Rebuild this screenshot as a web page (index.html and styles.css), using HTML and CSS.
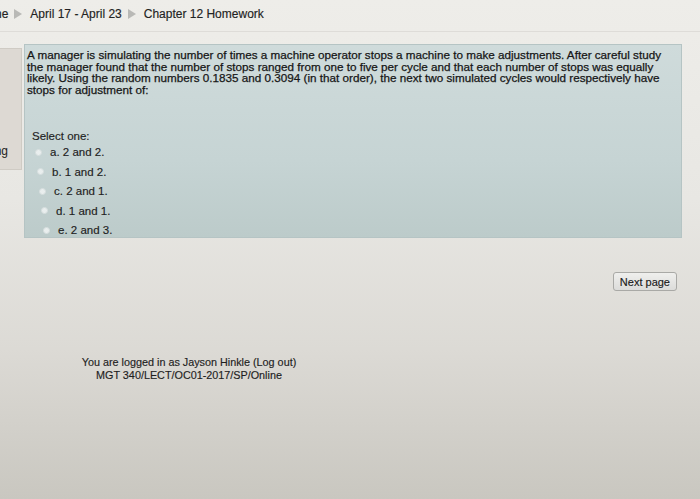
FILE: index.html
```html
<!DOCTYPE html>
<html>
<head>
<meta charset="utf-8">
<link rel="stylesheet" href="styles.css">
</head>
<body>
<div class="page">
  <div class="crumbs">
    <span class="cut">ne</span><span class="sep"></span><span>April 17 - April 23</span><span class="sep"></span><span>Chapter 12 Homework</span>
  </div>
  <div class="rule"></div>
  <div class="main">
    <div class="info"><span>ng</span></div>
    <div class="question">
      <p class="qtext">A manager is simulating the number of times a machine operator stops a machine to make adjustments. After careful study the manager found that the number of stops ranged from one to five per cycle and that each number of stops was equally likely. Using the random numbers 0.1835 and 0.3094 (in that order), the next two simulated cycles would respectively have stops for adjustment of:</p>
      <div class="prompt">Select one:</div>
      <div class="opts">
        <div class="opt"><span class="radio"></span>a. 2 and 2.</div>
        <div class="opt"><span class="radio"></span>b. 1 and 2.</div>
        <div class="opt"><span class="radio"></span>c. 2 and 1.</div>
        <div class="opt"><span class="radio"></span>d. 1 and 1.</div>
        <div class="opt"><span class="radio"></span>e. 2 and 3.</div>
      </div>
    </div>
  </div>
  <div class="nav"><button class="next">Next page</button></div>
  <div class="footer">
    <div>You are logged in as Jayson Hinkle (Log out)</div>
    <div>MGT 340/LECT/OC01-2017/SP/Online</div>
  </div>
</div>
</body>
</html>
```
FILE: styles.css
```css
html, body {
  margin: 0;
  padding: 0;
}
body {
  width: 700px;
  height: 499px;
  overflow: hidden;
  font-family: "Liberation Sans", Arial, sans-serif;
  color: #1e1e1e;
  background: linear-gradient(180deg, #eeede9 0%, #e8e7e3 40%, #dcdad5 70%, #c9c7c0 100%);
}
.page {
  height: 499px;
  display: flex;
  flex-direction: column;
}
.crumbs {
  display: flex;
  align-items: center;
  height: 28px;
  font-size: 12px;
  color: #222;
  margin-left: -5px;
  -webkit-text-stroke: 0.15px #222;
}
.sep {
  width: 0;
  height: 0;
  border-top: 5px solid transparent;
  border-bottom: 5px solid transparent;
  border-left: 8px solid #b9b9b6;
  margin: 0 8px 0 6px;
}
.rule {
  height: 1px;
  background: #dedcd8;
  margin-top: 3px;
}
.main {
  display: flex;
  align-items: flex-start;
  margin-top: 12px;
}
.info {
  width: 22px;
  height: 122px;
  margin-top: 4px;
  background: #ddd9d3;
  border: 1px solid #cfcbc4;
  border-left: none;
  box-sizing: border-box;
  display: flex;
  align-items: flex-end;
  justify-content: flex-end;
  font-size: 12px;
  padding-bottom: 11px;
  overflow: hidden;
}
.info span {
  margin-right: 13px;
  flex-shrink: 0;
}
.question {
  width: 658px;
  height: 194px;
  margin-left: 2px;
  box-sizing: border-box;
  background: linear-gradient(180deg, #cfdbdb 0%, #c6d4d4 60%, #bccbca 100%);
  border: 1px solid #b5c4c4;
  padding: 4px 0 0 2px;
}
.qtext {
  margin: 0;
  width: 646px;
  font-size: 11.7px;
  line-height: 11.6px;
  color: #161616;
  -webkit-text-stroke: 0.25px #161616;
}
.prompt {
  font-size: 11.5px;
  margin-top: 35px;
  margin-left: 5px;
  color: #222;
  -webkit-text-stroke: 0.15px #222;
}
.opts {
  display: flex;
  flex-direction: column;
}
.opt {
  display: flex;
  align-items: center;
  height: 19.5px;
  font-size: 11.5px;
  color: #222;
  margin-left: 8px;
  -webkit-text-stroke: 0.15px #222;
}
.opt:nth-child(2) { margin-left: 10px; }
.opt:nth-child(3) { margin-left: 12px; }
.opt:nth-child(4) { margin-left: 14px; }
.opt:nth-child(5) { margin-left: 16px; }
.radio {
  width: 5px;
  height: 5px;
  border-radius: 50%;
  background: #e9eeee;
  border: 1px solid #d6dede;
  margin-right: 8px;
}
.nav {
  display: flex;
  justify-content: flex-end;
  padding-right: 23px;
  margin-top: 34px;
}
.next {
  font-family: "Liberation Sans", Arial, sans-serif;
  font-size: 11px;
  color: #1a1a1a;
  padding: 0 6px;
  height: 19px;
  background: linear-gradient(180deg, #efefed, #dcdcda);
  border: 1px solid #a9a9a6;
  border-radius: 3px;
  -webkit-text-stroke: 0.15px #1a1a1a;
}
.footer {
  margin-top: 65px;
  width: 378px;
  display: flex;
  flex-direction: column;
  align-items: center;
  font-size: 10.8px;
  line-height: 12.5px;
  color: #1e1e1e;
  -webkit-text-stroke: 0.15px #1e1e1e;
}
```
